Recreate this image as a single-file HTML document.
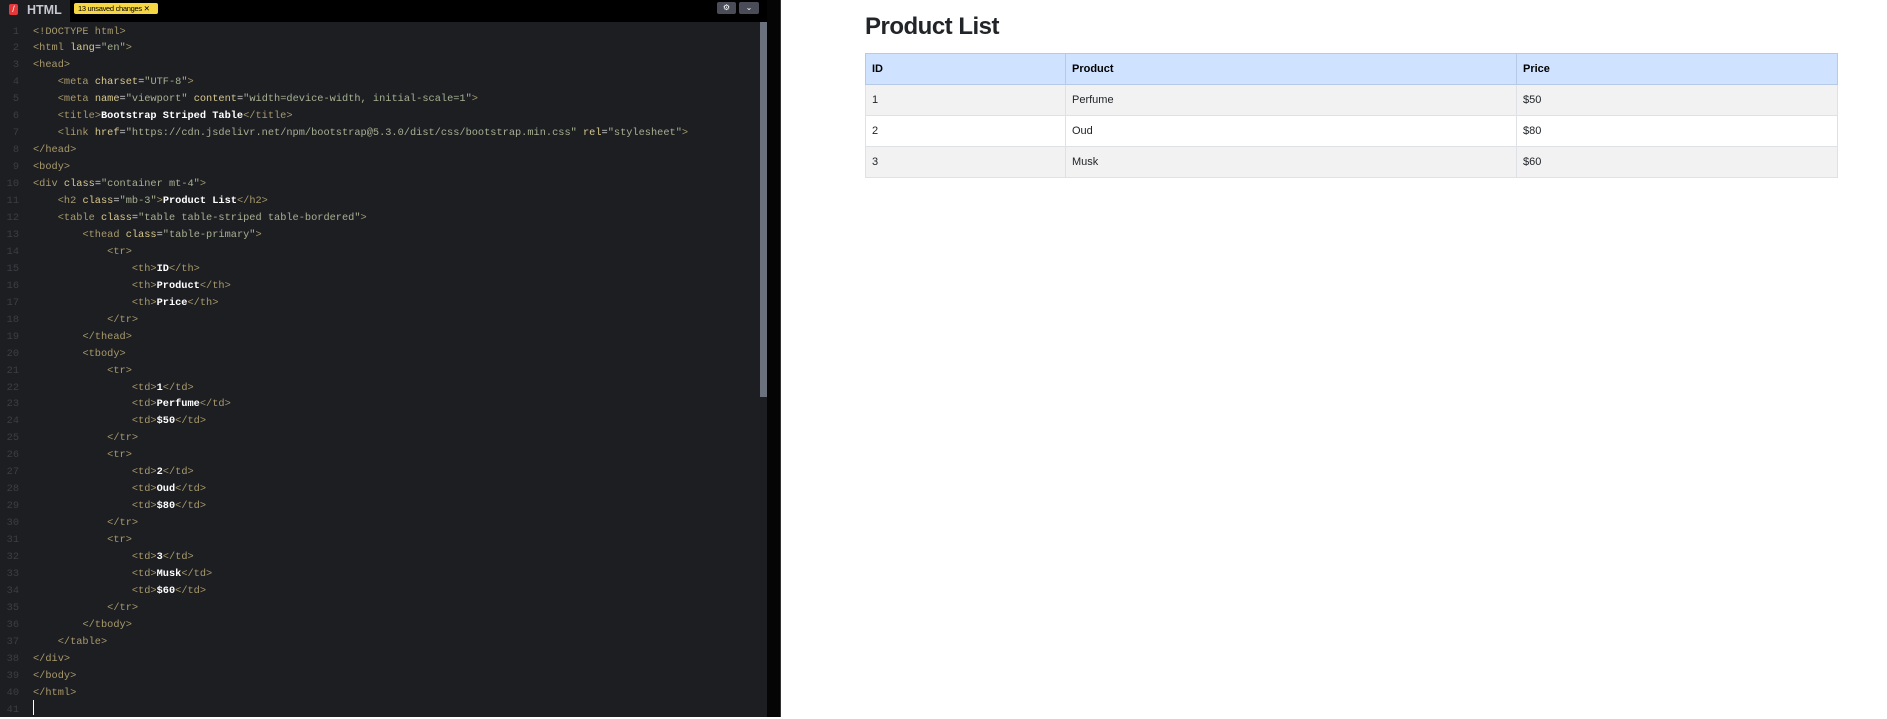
<!DOCTYPE html>
<html><head><meta charset="utf-8"><style>
*{margin:0;padding:0;box-sizing:border-box}
body{width:1887px;height:717px;background:#fff;position:relative;overflow:hidden;font-family:"Liberation Sans",sans-serif}
#hdr{position:absolute;left:0;top:0;width:767px;height:22px;background:#000}
#hdrl{position:absolute;left:0;top:0;width:70px;height:22px;background:#1d1e22}
#logo{position:absolute;left:9px;top:4px;width:9px;height:11px;background:#e5383b;border-radius:2px;color:#fff;font-size:9px;line-height:11px;text-align:center}
#ttl{position:absolute;left:27px;top:3px;font-weight:bold;font-size:12.5px;color:#c5c8d0}
#badge{position:absolute;left:74px;top:3px;width:84px;height:11px;background:#f6d743;border-radius:2px;font-size:7.5px;line-height:11px;color:#000;padding-left:4px;white-space:nowrap;letter-spacing:-0.3px}
.btn{position:absolute;top:2px;height:12px;background:#4a4d57;border-radius:2px;color:#fff;font-size:8px;text-align:center;line-height:12px}
#ed{position:absolute;left:0;top:22px;width:760px;height:695px;background:#1d1e22}
#sb{position:absolute;left:760px;top:22px;width:7px;height:375px;background:#6b717d}
#sbt{position:absolute;left:760px;top:397px;width:7px;height:320px;background:#1d1e22}
#strip{position:absolute;left:767px;top:0;width:13px;height:717px;background:#050505}
#brd{position:absolute;left:780px;top:0;width:1px;height:717px;background:#333}
#code{position:absolute;left:0;top:23.5px;font-family:"Liberation Mono",monospace;font-size:10.3px;line-height:16.95px;white-space:pre;color:#d4d4d4}
.ln{display:inline-block;width:19px;text-align:right;color:#3c3e44;margin-right:14px}
.t{color:#a99a6c}.a{color:#d9c98e}.s{color:#a7b092}.w{color:#fff;font-weight:bold}
#cur{position:absolute;left:33px;top:700px;width:1px;height:15px;background:#fff}
h2{position:absolute;left:865px;top:13px;font-size:24px;font-weight:bold;letter-spacing:-0.5px;color:#212529;font-family:"Liberation Sans",sans-serif}
table{position:absolute;left:865px;top:53px;width:973px;border-collapse:collapse;font-size:11px;color:#212529}
td,th{border:1px solid #dee2e6;height:31px;padding:0 6px;text-align:left;vertical-align:middle}
th{background:#cfe2ff;border-color:#b6c9e6;font-weight:bold;color:#000}
tr.o td{background:#f2f2f2}
</style></head><body>
<div id="hdr"></div><div id="hdrl"></div>
<div id="logo">/</div><div id="ttl">HTML</div>
<div id="badge">13 unsaved changes ✕</div>
<div class="btn" style="left:717px;width:19px">⚙</div>
<div class="btn" style="left:739px;width:20px">⌄</div>
<div id="ed"></div><div id="sb"></div><div id="sbt"></div><div id="strip"></div><div id="brd"></div>
<div id="code"><span class="ln">1</span><span class="t">&lt;!DOCTYPE html&gt;</span>
<span class="ln">2</span><span class="t">&lt;html</span> <span class="a">lang</span>=<span class="s">"en"</span><span class="t">&gt;</span>
<span class="ln">3</span><span class="t">&lt;head&gt;</span>
<span class="ln">4</span>    <span class="t">&lt;meta</span> <span class="a">charset</span>=<span class="s">"UTF-8"</span><span class="t">&gt;</span>
<span class="ln">5</span>    <span class="t">&lt;meta</span> <span class="a">name</span>=<span class="s">"viewport"</span> <span class="a">content</span>=<span class="s">"width=device-width, initial-scale=1"</span><span class="t">&gt;</span>
<span class="ln">6</span>    <span class="t">&lt;title&gt;</span><span class="w">Bootstrap Striped Table</span><span class="t">&lt;/title&gt;</span>
<span class="ln">7</span>    <span class="t">&lt;link</span> <span class="a">href</span>=<span class="s">"https://cdn.jsdelivr.net/npm/bootstrap@5.3.0/dist/css/bootstrap.min.css"</span> <span class="a">rel</span>=<span class="s">"stylesheet"</span><span class="t">&gt;</span>
<span class="ln">8</span><span class="t">&lt;/head&gt;</span>
<span class="ln">9</span><span class="t">&lt;body&gt;</span>
<span class="ln">10</span><span class="t">&lt;div</span> <span class="a">class</span>=<span class="s">"container mt-4"</span><span class="t">&gt;</span>
<span class="ln">11</span>    <span class="t">&lt;h2</span> <span class="a">class</span>=<span class="s">"mb-3"</span><span class="t">&gt;</span><span class="w">Product List</span><span class="t">&lt;/h2&gt;</span>
<span class="ln">12</span>    <span class="t">&lt;table</span> <span class="a">class</span>=<span class="s">"table table-striped table-bordered"</span><span class="t">&gt;</span>
<span class="ln">13</span>        <span class="t">&lt;thead</span> <span class="a">class</span>=<span class="s">"table-primary"</span><span class="t">&gt;</span>
<span class="ln">14</span>            <span class="t">&lt;tr&gt;</span>
<span class="ln">15</span>                <span class="t">&lt;th&gt;</span><span class="w">ID</span><span class="t">&lt;/th&gt;</span>
<span class="ln">16</span>                <span class="t">&lt;th&gt;</span><span class="w">Product</span><span class="t">&lt;/th&gt;</span>
<span class="ln">17</span>                <span class="t">&lt;th&gt;</span><span class="w">Price</span><span class="t">&lt;/th&gt;</span>
<span class="ln">18</span>            <span class="t">&lt;/tr&gt;</span>
<span class="ln">19</span>        <span class="t">&lt;/thead&gt;</span>
<span class="ln">20</span>        <span class="t">&lt;tbody&gt;</span>
<span class="ln">21</span>            <span class="t">&lt;tr&gt;</span>
<span class="ln">22</span>                <span class="t">&lt;td&gt;</span><span class="w">1</span><span class="t">&lt;/td&gt;</span>
<span class="ln">23</span>                <span class="t">&lt;td&gt;</span><span class="w">Perfume</span><span class="t">&lt;/td&gt;</span>
<span class="ln">24</span>                <span class="t">&lt;td&gt;</span><span class="w">$50</span><span class="t">&lt;/td&gt;</span>
<span class="ln">25</span>            <span class="t">&lt;/tr&gt;</span>
<span class="ln">26</span>            <span class="t">&lt;tr&gt;</span>
<span class="ln">27</span>                <span class="t">&lt;td&gt;</span><span class="w">2</span><span class="t">&lt;/td&gt;</span>
<span class="ln">28</span>                <span class="t">&lt;td&gt;</span><span class="w">Oud</span><span class="t">&lt;/td&gt;</span>
<span class="ln">29</span>                <span class="t">&lt;td&gt;</span><span class="w">$80</span><span class="t">&lt;/td&gt;</span>
<span class="ln">30</span>            <span class="t">&lt;/tr&gt;</span>
<span class="ln">31</span>            <span class="t">&lt;tr&gt;</span>
<span class="ln">32</span>                <span class="t">&lt;td&gt;</span><span class="w">3</span><span class="t">&lt;/td&gt;</span>
<span class="ln">33</span>                <span class="t">&lt;td&gt;</span><span class="w">Musk</span><span class="t">&lt;/td&gt;</span>
<span class="ln">34</span>                <span class="t">&lt;td&gt;</span><span class="w">$60</span><span class="t">&lt;/td&gt;</span>
<span class="ln">35</span>            <span class="t">&lt;/tr&gt;</span>
<span class="ln">36</span>        <span class="t">&lt;/tbody&gt;</span>
<span class="ln">37</span>    <span class="t">&lt;/table&gt;</span>
<span class="ln">38</span><span class="t">&lt;/div&gt;</span>
<span class="ln">39</span><span class="t">&lt;/body&gt;</span>
<span class="ln">40</span><span class="t">&lt;/html&gt;</span>
<span class="ln">41</span></div>
<div id="cur"></div>
<h2>Product List</h2>
<table>
<tr><th style="width:200px">ID</th><th style="width:451px">Product</th><th>Price</th></tr>
<tr class="o"><td>1</td><td>Perfume</td><td>$50</td></tr>
<tr><td>2</td><td>Oud</td><td>$80</td></tr>
<tr class="o"><td>3</td><td>Musk</td><td>$60</td></tr>
</table>
</body></html>
